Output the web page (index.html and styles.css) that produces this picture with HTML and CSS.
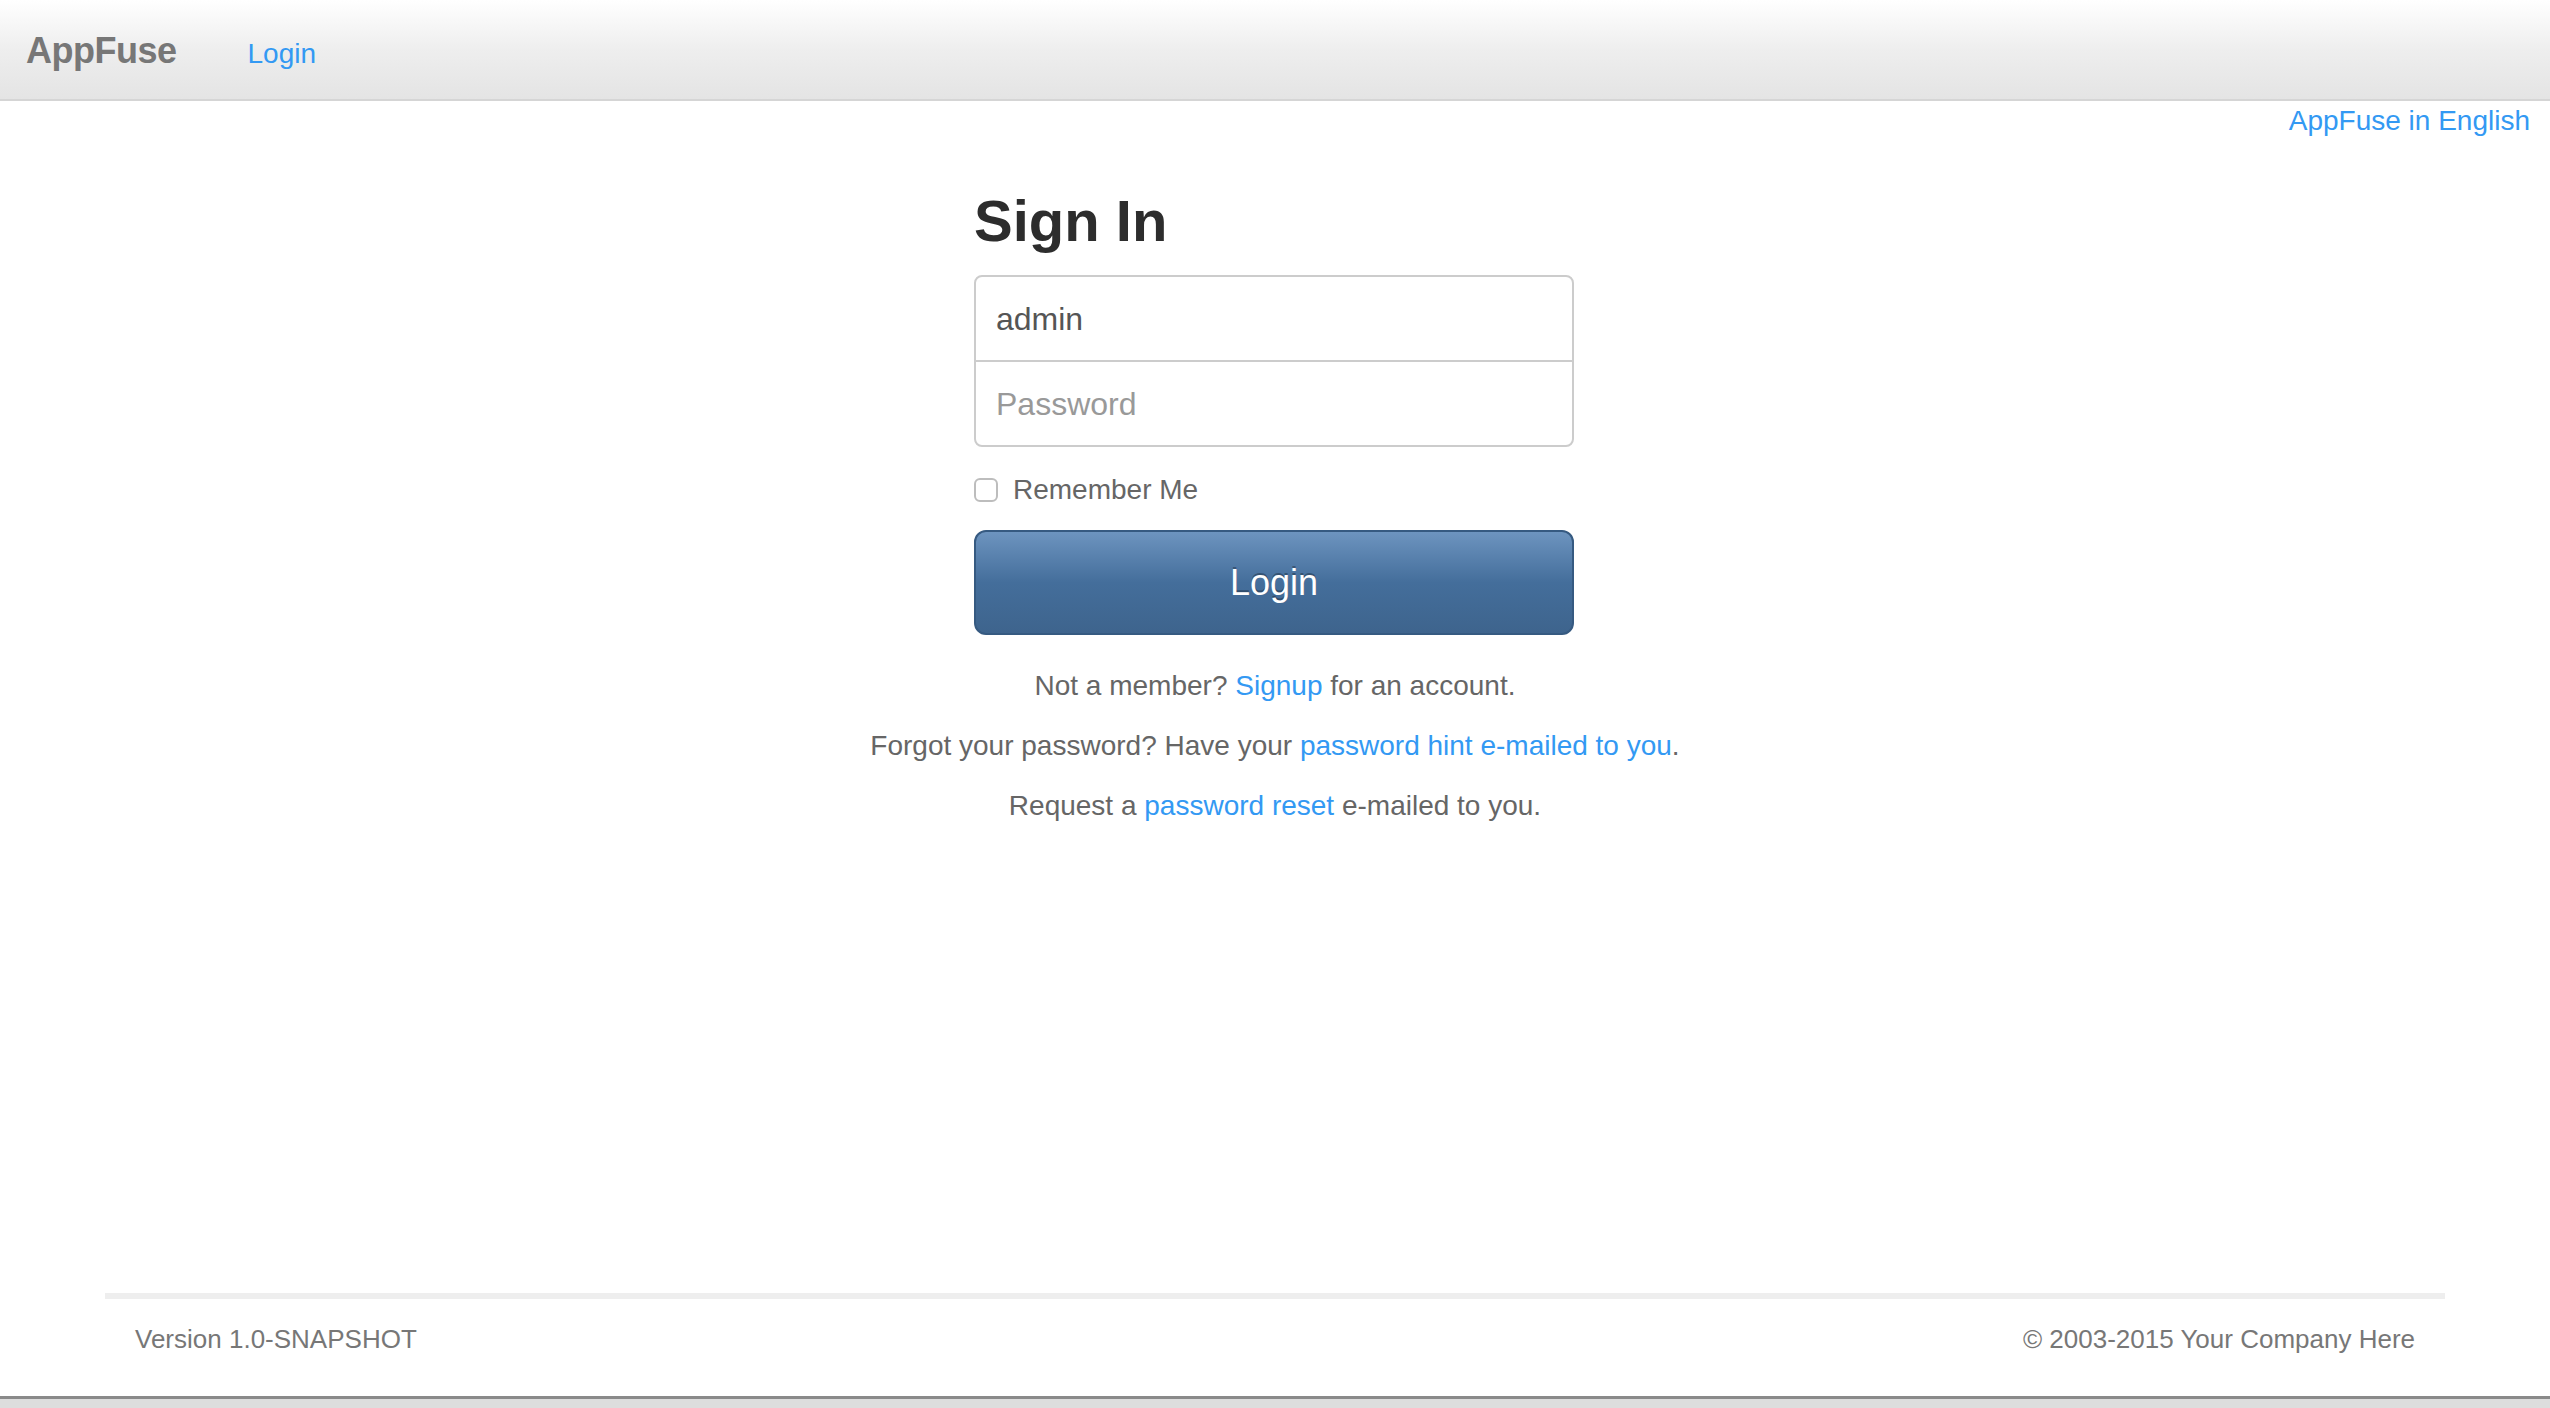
FILE: index.html
```html
<!DOCTYPE html>
<html lang="en">
<head>
<meta charset="utf-8">
<title>Login | AppFuse</title>
<link rel="stylesheet" href="styles.css">
</head>
<body>
<header class="navbar">
  <a class="brand" href="#">AppFuse</a>
  <nav class="nav"><a href="#" class="nav-link">Login</a></nav>
</header>
<div class="lang"><a href="#">AppFuse in English</a></div>
<main class="main">
  <form class="signin">
    <h2 class="signin-heading">Sign In</h2>
    <div class="inputs">
      <div class="field field-top">admin</div>
      <div class="field field-bottom placeholder">Password</div>
    </div>
    <label class="remember"><span class="checkbox"></span>Remember Me</label>
    <button type="button" class="btn-login">Login</button>
  </form>
  <div class="links">
    <p>Not a member? <a href="#">Signup</a> for an account.</p>
    <p>Forgot your password? Have your <a href="#">password hint e-mailed to you</a>.</p>
    <p>Request a <a href="#">password reset</a> e-mailed to you.</p>
  </div>
</main>
<footer class="footer">
  <span class="foot-left">Version 1.0-SNAPSHOT</span>
  <span class="foot-right">&copy; 2003-2015 <a href="#">Your Company Here</a></span>
</footer>
<div class="bottom-strip"></div>
</body>
</html>
```

FILE: styles.css
```css
* { box-sizing: border-box; }
html, body { margin: 0; padding: 0; }
body {
  min-height: 100vh;
  display: flex;
  flex-direction: column;
  font-family: "Liberation Sans", Arial, Helvetica, sans-serif;
  font-size: 28px;
  line-height: 40px;
  color: #666666;
  background: #ffffff;
}
a { color: #3399f3; text-decoration: none; }

.navbar {
  height: 101px;
  display: flex;
  align-items: center;
  background-image: linear-gradient(#ffffff, #eeeeee 50%, #e4e4e4);
  border-bottom: 2px solid #d5d5d5;
  padding-left: 26px;
}
.brand {
  font-size: 36px;
  font-weight: bold;
  color: #777777;
  letter-spacing: -0.5px;
  margin-top: 2px;
}
.nav { margin-left: 71px; margin-top: 8px; }
.nav-link { font-size: 28px; color: #3399f3; }

.lang {
  text-align: right;
  padding-right: 20px;
  line-height: 40px;
}

.main {
  flex: 1;
  display: flex;
  flex-direction: column;
  align-items: center;
}
.signin {
  width: 600px;
  margin-top: 47px;
  margin-left: -2px;
}
.signin-heading {
  margin: 0 0 21px;
  font-size: 58px;
  line-height: 66px;
  font-weight: bold;
  color: #2d2d2d;
}
.inputs { display: flex; flex-direction: column; }
.field {
  height: 87px;
  border: 2px solid #cccccc;
  padding: 0 20px;
  display: flex;
  align-items: center;
  font-size: 32px;
  color: #555555;
  background: #fff;
}
.field-top { border-radius: 8px 8px 0 0; }
.field-bottom { border-radius: 0 0 8px 8px; margin-top: -2px; }
.placeholder { color: #999999; }
.remember {
  display: flex;
  align-items: center;
  gap: 15px;
  margin: 23px 0 20px;
  height: 40px;
  font-size: 28px;
  color: #666666;
}
.checkbox {
  width: 24px;
  height: 24px;
  border: 2px solid #bdbdbd;
  border-radius: 6px;
  background: #fff;
}
.btn-login {
  display: block;
  width: 600px;
  height: 105px;
  border: 2px solid #365a81;
  border-radius: 12px;
  background-image: linear-gradient(#6d94bf, #446e9b 50%, #3e648d);
  color: #ffffff;
  font-family: inherit;
  font-size: 36px;
  text-shadow: 0 -2px 0 rgba(0,0,0,0.3);
  padding: 0;
}

.links {
  margin-top: 31px;
  text-align: center;
}
.links p { margin: 0 0 20px; line-height: 40px; }

.footer {
  width: 2340px;
  margin: 0 auto;
  border-top: 6px solid #eeeeee;
  padding: 20px 30px 37px;
  display: flex;
  justify-content: space-between;
  color: #777777;
  font-size: 26px;
  line-height: 40px;
}
.footer a { color: #777777; }
.bottom-strip {
  height: 12px;
  border-top: 3px solid #8a8a8a;
  background: #dddddd;
}
```
